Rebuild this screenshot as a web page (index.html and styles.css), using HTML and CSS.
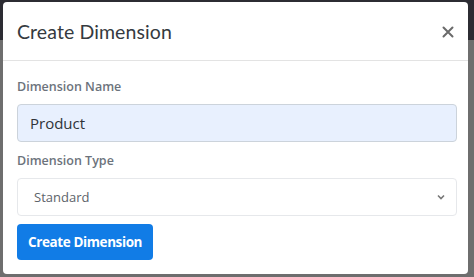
FILE: index.html
```html
<!DOCTYPE html>
<html>
<head>
<meta charset="utf-8">
<link rel="stylesheet" href="styles.css">
</head>
<body>
<div class="modal">
  <div class="modal-header">
    <h2 class="modal-title">Create Dimension</h2>
    <button class="close" aria-label="Close">
      <svg width="12" height="12" viewBox="0 0 12 12"><path d="M1.5 1.5 L10.5 10.5 M10.5 1.5 L1.5 10.5" stroke="#6a6a6a" stroke-width="2" stroke-linecap="round"/></svg>
    </button>
  </div>
  <div class="modal-body">
    <label class="field-label">Dimension Name</label>
    <div class="input">Product</div>
    <label class="field-label">Dimension Type</label>
    <div class="select">
      <span>Standard</span>
      <svg width="8" height="6" viewBox="0 0 8 6"><path d="M1 1.5 L4 4.5 L7 1.5" stroke="#777" stroke-width="1.6" fill="none"/></svg>
    </div>
    <button class="btn">Create Dimension</button>
  </div>
</div>
</body>
</html>
```
FILE: styles.css
```css
html, body { margin: 0; padding: 0; }
body {
  width: 474px;
  height: 277px;
  overflow: hidden;
  background: linear-gradient(#2c2c33 0, #2c2c33 40px, #6e6e6e 40px);
  font-family: "Open Sans", "Noto Sans", sans-serif;
  padding: 2px 6px 3px 3px;
  box-sizing: border-box;
}
.modal {
  background: #fff;
  border-radius: 4px;
  height: 272px;
  box-sizing: border-box;
  display: flex;
  flex-direction: column;
}
.modal-header {
  display: flex;
  align-items: center;
  justify-content: space-between;
  height: 58px;
  padding: 0 14px 0 14px;
  border-bottom: 1px solid #e3e3e3;
}
.modal-title {
  margin: 0;
  font-family: "Lato", "Open Sans", sans-serif;
  font-weight: 400;
  font-size: 19.5px;
  color: #353a40;
  letter-spacing: 0.1px;
}
.close {
  border: 0;
  background: none;
  padding: 0;
  width: 12px;
  height: 12px;
  display: flex;
  margin-top: 2px;
}
.modal-body {
  padding: 17px 11px 0 14px;
  display: flex;
  flex-direction: column;
}
.field-label {
  font-size: 12.5px;
  font-weight: 600;
  color: #6c737c;
  line-height: 18px;
  margin-bottom: 8px;
}
.input {
  height: 38px;
  box-sizing: border-box;
  border: 1px solid #ccd3db;
  background: #e8f0fe;
  border-radius: 4px;
  padding: 0 12px;
  display: flex;
  align-items: center;
  font-size: 15px;
  color: #2f3338;
  margin-bottom: 10px;
}
.select {
  height: 38px;
  box-sizing: border-box;
  border: 1px solid #e6e8eb;
  background: #fff;
  border-radius: 4px;
  padding: 0 11px 0 16px;
  display: flex;
  align-items: center;
  justify-content: space-between;
  font-size: 13px;
  color: #5d636a;
  margin-bottom: 8px;
}
.btn {
  align-self: flex-start;
  border: 0;
  background: #117ce6;
  color: #fff;
  font-family: "Open Sans", sans-serif;
  font-weight: 700;
  font-size: 13.5px;
  height: 36px;
  padding: 0 11px;
  border-radius: 4px;
  letter-spacing: -0.4px;
}
```
